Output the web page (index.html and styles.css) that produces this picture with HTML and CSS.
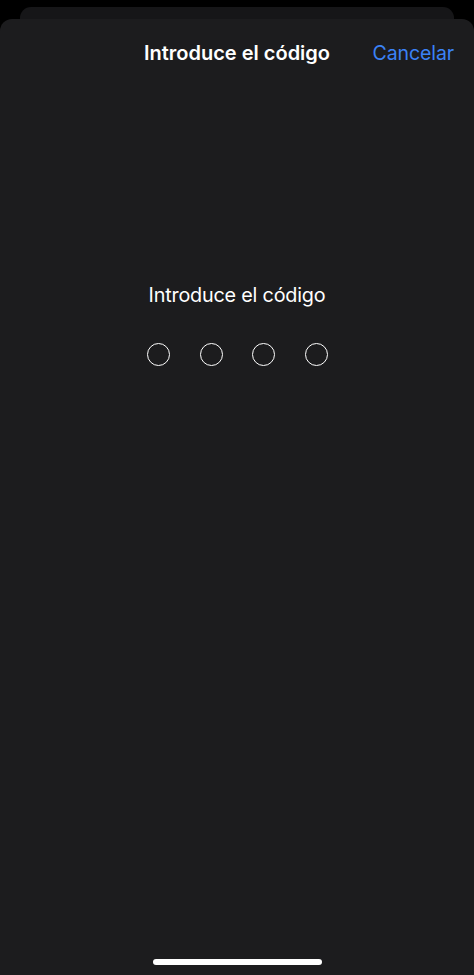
FILE: index.html
```html
<!DOCTYPE html>
<html lang="es">
<head>
<meta charset="utf-8">
<title>Introduce el código</title>
<link rel="stylesheet" href="styles.css">
</head>
<body>
<div class="stage">
  <div class="back-sheet"></div>
  <div class="sheet">
    <header class="nav">
      <div class="nav-side"></div>
      <h1 class="nav-title">Introduce el código</h1>
      <div class="nav-side nav-right"><span class="cancel">Cancelar</span></div>
    </header>
    <main class="code-entry">
      <p class="prompt">Introduce el código</p>
      <div class="dots">
        <span class="dot"></span>
        <span class="dot"></span>
        <span class="dot"></span>
        <span class="dot"></span>
      </div>
    </main>
    <div class="home-indicator"></div>
  </div>
</div>
</body>
</html>
```
FILE: styles.css
```css
html, body {
  margin: 0;
  padding: 0;
  background: #000;
  font-family: Inter, "Noto Sans", "Liberation Sans", sans-serif;
  color: #fff;
}
.stage {
  height: 975px;
  padding-top: 7px;
  box-sizing: border-box;
  display: flex;
  flex-direction: column;
  overflow: hidden;
}
.back-sheet {
  margin: 0 20px;
  height: 12px;
  flex: none;
  background: #161618;
  border-radius: 11px 11px 0 0;
}
.sheet {
  flex: 1;
  background: #1c1c1e;
  border-radius: 12px 12px 0 0;
  display: flex;
  flex-direction: column;
}
.nav {
  height: 68px;
  display: grid;
  grid-template-columns: 1fr auto 1fr;
  align-items: center;
  padding: 0 20px;
}
.nav-title {
  margin: 0;
  font-size: 20px;
  font-weight: 600;
  letter-spacing: 0;
}
.nav-right {
  text-align: right;
}
.cancel {
  font-size: 19.5px;
  color: #3b82f6;
  letter-spacing: -0.1px;
}
.code-entry {
  display: flex;
  flex-direction: column;
  align-items: center;
  padding-top: 196px;
}
.prompt {
  margin: 0;
  font-size: 19.8px;
  line-height: 24px;
  font-weight: 400;
  letter-spacing: -0.2px;
}
.dots {
  display: flex;
  gap: 29.5px;
  margin-top: 36px;
  padding-left: 1px;
}
.dot {
  width: 23px;
  height: 23px;
  box-sizing: border-box;
  border: 1.7px solid #fff;
  border-radius: 50%;
}
.home-indicator {
  margin-top: auto;
  margin-bottom: 10px;
  align-self: center;
  width: 169px;
  height: 6px;
  border-radius: 3px;
  background: #fff;
}
```
